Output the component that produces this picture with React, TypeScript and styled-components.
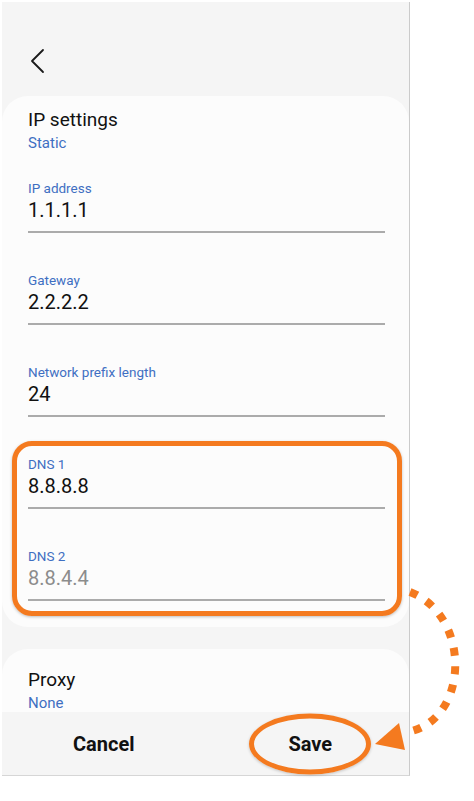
import styled, { createGlobalStyle } from "styled-components";

const ORANGE = "#f47a1f";
const BLUE = "#3f6fc2";

const GlobalStyle = createGlobalStyle`
  html, body { margin: 0; background: #fff; }
  body { font-family: Roboto, "Noto Sans", Arial, sans-serif; color: #111; }
  * { box-sizing: border-box; }
`;

const Page = styled.div`
  position: relative;
  width: 474px;
  height: 801px;
  padding: 2px 0 0 2px;
  overflow: hidden;
`;

const Screen = styled.div`
  width: 408px;
  height: 774px;
  display: flex;
  flex-direction: column;
  background: #f5f5f5;
  border-right: 1px solid #cbcbcb;
  border-bottom: 1px solid #d6d6d6;
`;

const Header = styled.div`
  height: 94px;
  flex-shrink: 0;
  padding: 46px 0 0 28px;
`;

const Content = styled.div`
  flex: 1;
  overflow: hidden;
  display: flex;
  flex-direction: column;
  gap: 22px;
`;

const Card = styled.div<{ $pad: string }>`
  flex-shrink: 0;
  background: #fcfcfc;
  border-radius: 26px;
  padding: ${(p) => p.$pad};
  display: flex;
  flex-direction: column;
`;

const Title = styled.div`
  font-size: 19px;
  line-height: 24px;
  color: #111;
`;

const Summary = styled.div`
  font-size: 15px;
  line-height: 18px;
  color: ${BLUE};
  margin-top: 2px;
`;

const Fields = styled.div`
  display: flex;
  flex-direction: column;
  gap: 39px;
  margin-top: 28px;
`;

const Highlight = styled.div`
  display: flex;
  flex-direction: column;
  gap: 39px;
  margin: 24px -17px 0 -16px;
  padding: 10px 12px 10px 11px;
  border: 5px solid ${ORANGE};
  border-radius: 20px;
  box-shadow: 0 1px 3px rgba(0, 0, 0, 0.25);
`;

const Field = styled.div``;

const Label = styled.div`
  font-size: 13.5px;
  line-height: 16px;
  color: ${BLUE};
`;

const Value = styled.div<{ $muted?: boolean }>`
  margin-top: 2px;
  padding-bottom: 9px;
  font-size: 20px;
  line-height: 24px;
  color: ${(p) => (p.$muted ? "#8c8c8c" : "#111")};
  border-bottom: 2px solid #ababab;
`;

const BottomBar = styled.div`
  height: 63px;
  flex-shrink: 0;
  display: grid;
  grid-template-columns: 1fr 1fr;
  align-items: center;
  justify-items: center;
`;

const Action = styled.div<{ $circled?: boolean }>`
  position: relative;
  font-size: 20px;
  font-weight: 700;
  color: #111;
  margin-left: ${(p) => (p.$circled ? "6px" : "0")};

  ${(p) =>
    p.$circled &&
    `
    &::after {
      content: "";
      position: absolute;
      left: 50%;
      top: 50%;
      width: 112px;
      height: 51px;
      transform: translate(-50%, -50%);
      border: 5px solid ${ORANGE};
      border-radius: 50%;
      box-shadow: 0 1px 3px rgba(0, 0, 0, 0.2);
    }
  `}
`;

const Overlay = styled.svg`
  position: absolute;
  left: 0;
  top: 0;
  pointer-events: none;
`;

type FieldProps = { label: string; value: string; muted?: boolean };

function InputField({ label, value, muted }: FieldProps) {
  return (
    <Field>
      <Label>{label}</Label>
      <Value $muted={muted}>{value}</Value>
    </Field>
  );
}

export default function App() {
  return (
    <>
      <GlobalStyle />
      <Page>
        <Screen>
          <Header>
            <svg width="16" height="26" viewBox="0 0 16 26">
              <path
                d="M13 2 L2 13 L13 24"
                fill="none"
                stroke="#1a1a1a"
                strokeWidth="1.8"
                strokeLinecap="round"
                strokeLinejoin="round"
              />
            </svg>
          </Header>
          <Content>
            <Card $pad="12px 24px 11px 26px">
              <Title>IP settings</Title>
              <Summary>Static</Summary>
              <Fields>
                <InputField label="IP address" value="1.1.1.1" />
                <InputField label="Gateway" value="2.2.2.2" />
                <InputField label="Network prefix length" value="24" />
              </Fields>
              <Highlight>
                <InputField label="DNS 1" value="8.8.8.8" />
                <InputField label="DNS 2" value="8.8.4.4" muted />
              </Highlight>
            </Card>
            <Card $pad="19px 24px 30px 26px">
              <Title>Proxy</Title>
              <Summary>None</Summary>
            </Card>
          </Content>
          <BottomBar>
            <Action>Cancel</Action>
            <Action $circled>Save</Action>
          </BottomBar>
        </Screen>
        <Overlay width="474" height="801" viewBox="0 0 474 801">
          <path
            d="M410 592 C470 615 470 715 412 731"
            fill="none"
            stroke={ORANGE}
            strokeWidth="8"
            strokeDasharray="8 10.5"
          />
          <polygon points="375,744 399,723 405,750" fill={ORANGE} />
        </Overlay>
      </Page>
    </>
  );
}
